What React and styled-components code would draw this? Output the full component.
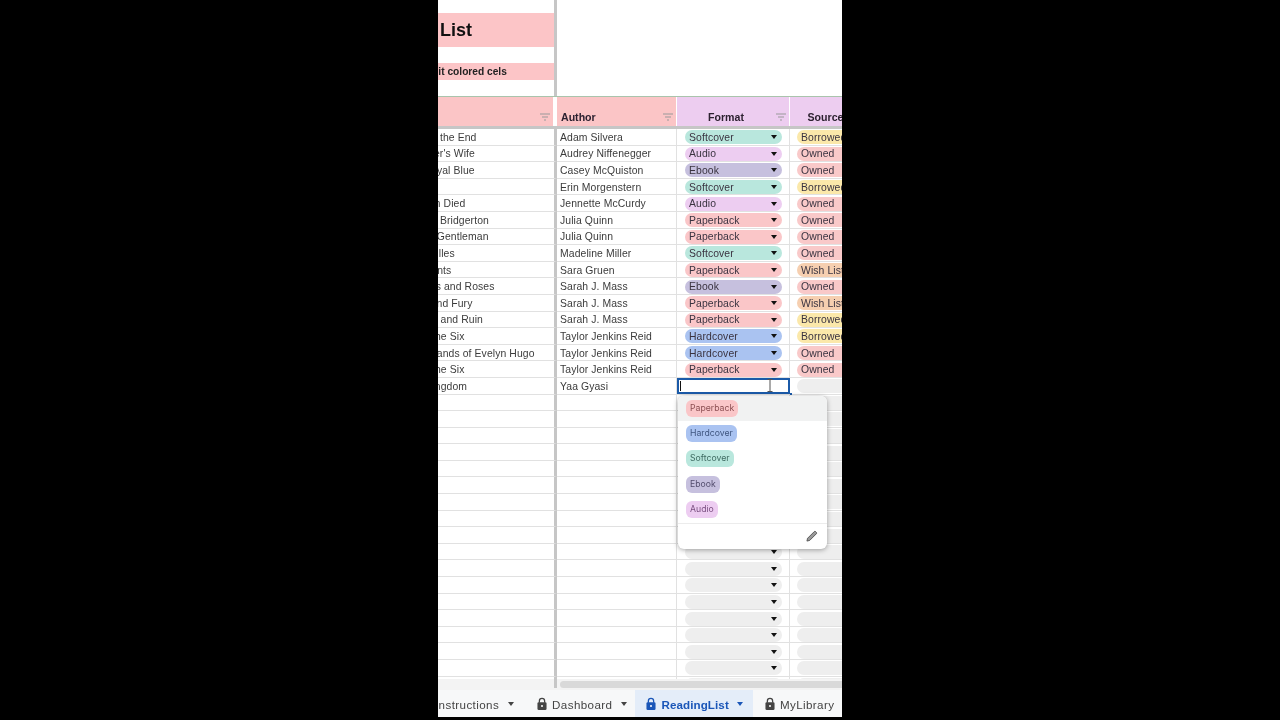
import React from 'react';
import styled, { createGlobalStyle } from 'styled-components';

const GlobalStyle = createGlobalStyle`
  html, body {
    margin: 0;
    padding: 0;
    height: 100%;
    background: #000;
    font-family: 'Liberation Sans', Arial, sans-serif;
  }
`;

const chipColors = {
  Softcover: '#b9e7dd',
  Audio: '#edcdf1',
  Ebook: '#c6c0de',
  Paperback: '#fac6c8',
  Hardcover: '#aac3f1',
  Borrowed: '#fbe8aa',
  Owned: '#f9c9c9',
  'Wish List': '#f6cfb0',
  '': '#eeeeee',
};

const optionText = {
  Paperback: '#8c4f52',
  Hardcover: '#3f557f',
  Softcover: '#3f6b62',
  Ebook: '#534d6d',
  Audio: '#7a4f80',
};

const books = [
  ['They Both Die at the End', 'Adam Silvera', 'Softcover', 'Borrowed'],
  ["The Time Traveler's Wife", 'Audrey Niffenegger', 'Audio', 'Owned'],
  ['Red, White & Royal Blue', 'Casey McQuiston', 'Ebook', 'Owned'],
  ['The Night Circus', 'Erin Morgenstern', 'Softcover', 'Borrowed'],
  ["I'm Glad My Mom Died", 'Jennette McCurdy', 'Audio', 'Owned'],
  ['The Duke and I - Bridgerton', 'Julia Quinn', 'Paperback', 'Owned'],
  ['An Offer From a Gentleman', 'Julia Quinn', 'Paperback', 'Owned'],
  ['The Song of Achilles', 'Madeline Miller', 'Softcover', 'Owned'],
  ['Water for Elephants', 'Sara Gruen', 'Paperback', 'Wish List'],
  ['A Court of Thorns and Roses', 'Sarah J. Mass', 'Ebook', 'Owned'],
  ['A Court of Mist and Fury', 'Sarah J. Mass', 'Paperback', 'Wish List'],
  ['A Court of Wings and Ruin', 'Sarah J. Mass', 'Paperback', 'Borrowed'],
  ['Daisy Jones & The Six', 'Taylor Jenkins Reid', 'Hardcover', 'Borrowed'],
  ['The Seven Husbands of Evelyn Hugo', 'Taylor Jenkins Reid', 'Hardcover', 'Owned'],
  ['Daisy Jones & The Six', 'Taylor Jenkins Reid', 'Paperback', 'Owned'],
  ['Transcendent Kingdom', 'Yaa Gyasi', '', ''],
];

const emptyRows = Array.from({ length: 18 }, () => ['', '', '', '']);
const options = ['Paperback', 'Hardcover', 'Softcover', 'Ebook', 'Audio'];

const Page = styled.div`
  display: flex;
  justify-content: center;
  height: 720px;
  background: #000;
`;

const Sheet = styled.div`
  position: relative;
  display: flex;
  flex-direction: column;
  width: 404px;
  height: 717px;
  overflow: hidden;
  background: #fff;
  filter: blur(0.35px);
`;

/* the frozen title column starts left of the visible part */
const Banner = styled.div`
  display: flex;
  flex-shrink: 0;
  height: 96px;
  margin-left: -86px;
  border-bottom: 1px solid #a9c4ac;
`;

const BannerLeft = styled.div`
  display: flex;
  flex-direction: column;
  gap: 16px;
  box-sizing: border-box;
  width: 205px;
  padding-top: 13px;
  border-right: 3px solid #c6c6c6;
`;

const TitleBand = styled.div`
  height: 34px;
  padding-left: 12px;
  background: #fcc5c7;
  color: #111;
  font-size: 18px;
  font-weight: 700;
  line-height: 34px;
  white-space: nowrap;
  overflow: hidden;
`;

const NoteBand = styled.div`
  height: 17px;
  padding-left: 49px;
  background: #fcc5c7;
  color: #222;
  font-size: 10.2px;
  font-weight: 700;
  line-height: 18px;
  white-space: nowrap;
  overflow: hidden;
`;

const HeaderRow = styled.div`
  display: flex;
  flex-shrink: 0;
  height: 29px;
  margin-left: -86px;
  border-bottom: 3px solid #c6c6c6;
`;

const HeaderCell = styled.div`
  position: relative;
  display: flex;
  align-items: flex-end;
  justify-content: ${(p) => (p.$center ? 'center' : 'flex-start')};
  box-sizing: border-box;
  flex-shrink: 0;
  width: ${(p) => p.$width}px;
  padding: 0 ${(p) => (p.$center ? 14 : 0)}px 2px ${(p) => (p.$center ? 0 : 4)}px;
  margin-right: ${(p) => (p.$frozen ? 3 : 0)}px;
  background: ${(p) => p.$bg};
  border-right: 1px solid #fff;
  color: #2c2130;
  font-size: 10.6px;
  font-weight: 700;
  line-height: 14px;
`;

const FilterIcon = styled.svg`
  position: absolute;
  right: 2px;
  bottom: 5px;
  width: 12px;
  height: 8px;
`;

const Body = styled.div`
  flex-shrink: 0;
  height: 550px;
  overflow: hidden;
`;

const Row = styled.div`
  display: flex;
  height: 16.6px;
  margin-left: -86px;
`;

const Cell = styled.div`
  display: flex;
  align-items: center;
  box-sizing: border-box;
  flex-shrink: 0;
  width: ${(p) => p.$width}px;
  padding-top: 1px;
  padding-left: ${(p) => p.$pad || 0}px;
  border-bottom: 1px solid #e1e1e1;
  border-right: ${(p) => (p.$frozen ? '3px solid #c6c6c6' : '1px solid #e1e1e1')};
  color: #3b3b3b;
  font-size: 10.4px;
  letter-spacing: 0.1px;
  white-space: nowrap;
  overflow: hidden;
`;

const Chip = styled.div`
  display: flex;
  align-items: center;
  box-sizing: border-box;
  flex-shrink: 0;
  width: ${(p) => p.$width}px;
  height: 14px;
  padding: 0 5px 0 4px;
  border-radius: 7px;
  background: ${(p) => chipColors[p.$kind]};
  color: #3a3340;
`;

const Arrow = styled.span`
  width: 0;
  height: 0;
  margin-left: auto;
  border-left: 3.5px solid transparent;
  border-right: 3.5px solid transparent;
  border-top: 4px solid #111;
`;

const ScrollTrack = styled.div`
  display: flex;
  flex-shrink: 0;
  height: 11px;
  background: #f3f3f3;
`;

const ScrollFrozen = styled.div`
  box-sizing: border-box;
  width: 119px;
  height: 9px;
  border-right: 3px solid #c6c6c6;
`;

const ScrollThumb = styled.div`
  flex: 1;
  height: 7px;
  margin: 2px 0 0 3px;
  border-radius: 4px 0 0 4px;
  background: #d9d9d9;
`;

const TabBar = styled.div`
  display: flex;
  flex: 1;
  margin-left: -3px;
  background: #f7f8f9;
`;

const Tab = styled.div`
  display: flex;
  align-items: center;
  flex-shrink: 0;
  gap: 5px;
  padding: 1px ${(p) => p.$right}px 0 ${(p) => p.$left}px;
  background: ${(p) => (p.$active ? '#e4edf9' : 'transparent')};
  color: ${(p) => (p.$active ? '#1a56b8' : '#444')};
  font-size: 11.6px;
  font-weight: ${(p) => (p.$active ? 700 : 400)};
  letter-spacing: ${(p) => (p.$active ? 0.1 : 0.4)}px;
  white-space: nowrap;
`;

const TabCaret = styled.span`
  margin-left: 3.5px;
  border-left: 3.5px solid transparent;
  border-right: 3.5px solid transparent;
  border-top: 4px solid ${(p) => (p.$active ? '#1a56b8' : '#444')};
`;

const CellEditor = styled.div`
  position: absolute;
  left: 239px;
  top: 378px;
  box-sizing: border-box;
  width: 113px;
  height: 16px;
  padding: 1px 0 0 1px;
  border: 2px solid #1b5aa8;
  background: #fff;
`;

const Caret = styled.div`
  width: 1px;
  height: 10px;
  background: #111;
`;

const FillHandle = styled.div`
  position: absolute;
  right: -4px;
  bottom: -3px;
  width: 2px;
  height: 2px;
  background: #1b5aa8;
`;

const TextCursor = styled.svg`
  position: absolute;
  left: 329px;
  top: 379px;
  width: 6px;
  height: 13px;
`;

const Dropdown = styled.div`
  position: absolute;
  left: 240px;
  top: 396px;
  display: flex;
  flex-direction: column;
  width: 149px;
  height: 153px;
  border-radius: 6px;
  background: #fff;
  box-shadow: 0 1px 5px rgba(0, 0, 0, 0.35);
  overflow: hidden;
`;

const Option = styled.div`
  display: flex;
  align-items: center;
  flex-shrink: 0;
  height: 25.2px;
  padding-left: 8px;
  background: ${(p) => (p.$hover ? '#f1f2f2' : '#fff')};
`;

const OptionChip = styled.span`
  padding: 0 4px;
  border-radius: 6px;
  background: ${(p) => chipColors[p.$kind]};
  color: ${(p) => optionText[p.$kind]};
  font-family: Inter, 'Liberation Sans', sans-serif;
  font-size: 8.7px;
  line-height: 17px;
`;

const DropdownFoot = styled.div`
  display: flex;
  align-items: center;
  justify-content: flex-end;
  flex: 1;
  margin-top: 1px;
  padding-right: 9px;
  border-top: 1px solid #ececec;
`;

function LockIcon({ color }) {
  return (
    <svg width="10" height="14" viewBox="0 0 11 15">
      <path d="M2.6 6V4.2a2.9 2.9 0 0 1 5.8 0V6" fill="none" stroke={color} strokeWidth="1.4" />
      <rect x="0.5" y="5.6" width="10" height="8.6" rx="1.4" fill={color} />
      <circle cx="5.5" cy="9.8" r="1.1" fill="#fff" />
    </svg>
  );
}

function Filter() {
  return (
    <FilterIcon viewBox="0 0 12 8">
      <path d="M1 1h10M3 4h6M5 7h2" stroke="#9a9a9a" strokeWidth="1.2" />
    </FilterIcon>
  );
}

function App() {
  const rows = [...books, ...emptyRows];
  return (
    <Page>
      <GlobalStyle />
      <Sheet>
        <Banner>
          <BannerLeft>
            <TitleBand>Reading List</TitleBand>
            <NoteBand>Only edit colored cels</NoteBand>
          </BannerLeft>
        </Banner>
        <HeaderRow>
          <HeaderCell $width={202} $bg="#fbc5c6" $frozen>
            Title
            <Filter />
          </HeaderCell>
          <HeaderCell $width={120} $bg="#fbc5c6">
            Author
            <Filter />
          </HeaderCell>
          <HeaderCell $width={113} $bg="#edcdf0" $center>
            Format
            <Filter />
          </HeaderCell>
          <HeaderCell $width={86} $bg="#edcdf0" $center>
            Source
            <Filter />
          </HeaderCell>
        </HeaderRow>
        <Body>
          {rows.map((book, i) => (
            <Row key={i}>
              <Cell $width={205} $pad={6} $frozen>
                {book[0]}
              </Cell>
              <Cell $width={120} $pad={3}>
                {book[1]}
              </Cell>
              <Cell $width={113} $pad={8}>
                <Chip $kind={book[2]} $width={97}>
                  {book[2]}
                  <Arrow />
                </Chip>
              </Cell>
              <Cell $width={120} $pad={7}>
                <Chip $kind={book[3]} $width={97}>
                  {book[3]}
                  <Arrow />
                </Chip>
              </Cell>
            </Row>
          ))}
        </Body>
        <ScrollTrack>
          <ScrollFrozen />
          <ScrollThumb />
        </ScrollTrack>
        <TabBar>
          <Tab $left={0} $right={23.5}>
            Instructions
            <TabCaret />
          </Tab>
          <Tab $left={0} $right={8.5}>
            <LockIcon color="#444" />
            Dashboard
            <TabCaret />
          </Tab>
          <Tab $left={11} $right={9.5} $active>
            <LockIcon color="#1a56b8" />
            ReadingList
            <TabCaret $active />
          </Tab>
          <Tab $left={12} $right={0}>
            <LockIcon color="#444" />
            MyLibrary
          </Tab>
        </TabBar>
        <CellEditor>
          <Caret />
          <FillHandle />
        </CellEditor>
        <TextCursor viewBox="0 0 6 13">
          <path d="M0.5 0.5h5M3 0.5v12M0.5 12.5h5" stroke="#555" fill="none" />
        </TextCursor>
        <Dropdown>
          {options.map((name, i) => (
            <Option key={name} $hover={i === 0}>
              <OptionChip $kind={name}>{name}</OptionChip>
            </Option>
          ))}
          <DropdownFoot>
            <svg width="12" height="12" viewBox="0 0 13 13">
              <path d="M1 12l.7-3L9 1.7a1 1 0 0 1 1.4 0l.9.9a1 1 0 0 1 0 1.4L4 11.3z" fill="#999" stroke="#555" strokeWidth="1" />
            </svg>
          </DropdownFoot>
        </Dropdown>
      </Sheet>
    </Page>
  );
}

export default App;
